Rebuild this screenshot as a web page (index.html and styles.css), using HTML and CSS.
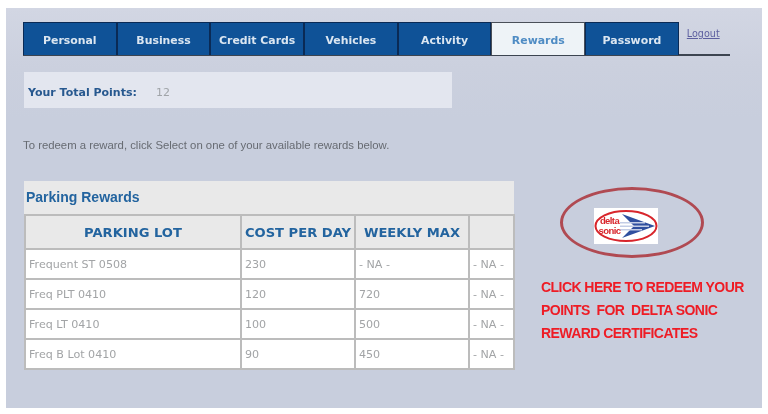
FILE: index.html
```html
<!DOCTYPE html>
<html lang="en">
<head>
<meta charset="utf-8">
<title>Rewards</title>
<link rel="stylesheet" href="styles.css">
</head>
<body>
<div class="panel">
  <nav class="nav">
    <a class="tab">Personal</a>
    <a class="tab">Business</a>
    <a class="tab">Credit Cards</a>
    <a class="tab">Vehicles</a>
    <a class="tab">Activity</a>
    <a class="tab active">Rewards</a>
    <a class="tab">Password</a>
    <a class="logout">Logout</a>
  </nav>
  <div class="content">
    <main class="main">
      <div class="points"><b>Your Total Points:</b><span>12</span></div>
      <p class="intro">To redeem a reward, click Select on one of your available rewards below.</p>
      <div class="rewards">
        <h2 class="title">Parking Rewards</h2>
        <table class="table">
          <colgroup><col class="c1"><col class="c2"><col class="c3"><col class="c4"></colgroup>
          <thead>
            <tr><th>PARKING LOT</th><th>COST PER DAY</th><th>WEEKLY MAX</th><th></th></tr>
          </thead>
          <tbody>
            <tr><td>Frequent ST 0508</td><td>230</td><td>- NA -</td><td>- NA -</td></tr>
            <tr><td>Freq PLT 0410</td><td>120</td><td>720</td><td>- NA -</td></tr>
            <tr><td>Freq LT 0410</td><td>100</td><td>500</td><td>- NA -</td></tr>
            <tr><td>Freq B Lot 0410</td><td>90</td><td>450</td><td>- NA -</td></tr>
          </tbody>
        </table>
      </div>
    </main>
    <aside class="side">
      <div class="ring">
        <div class="logo">
          <svg viewBox="0 0 64 36" width="64" height="36" aria-label="delta sonic">
            <ellipse cx="32" cy="18" rx="30.5" ry="15" fill="#fff" stroke="#d8262c" stroke-width="2"/>
            <path d="M28 6 L61 18 L28 30 L40 18 Z" fill="#2f4f9f"/>
            <path d="M26 14h25v1.5H26zM26 17.5h29v1.5H26zM26 21h22v1.5H26z" fill="#c3cde6"/>
            <text x="15.5" y="16" class="logo-text">delta</text>
            <text x="15.5" y="25.5" class="logo-text">sonic</text>
          </svg>
        </div>
      </div>
      <p class="cta">CLICK HERE TO REDEEM YOUR<br>POINTS&nbsp; FOR&nbsp; DELTA SONIC<br>REWARD CERTIFICATES</p>
    </aside>
  </div>
</div>
</body>
</html>
```
FILE: styles.css
```css
* { box-sizing: border-box; }
html, body { margin: 0; background: #fff; }
body { width: 768px; height: 414px; overflow: hidden; padding: 8px 6px 6px; }

.panel {
  height: 400px;
  padding: 14px 17px 0;
  background: linear-gradient(180deg, #d2d6e3 0, #cbd0de 60px, #c8cedd 110px);
  filter: blur(0.7px);
}

.nav { display: flex; height: 34px; width: 707px; border-bottom: 2px solid #3c4450; }
.tab {
  width: 93.7px;
  height: 33px;
  display: flex;
  align-items: center;
  justify-content: center;
  background: #0f5297;
  border: 1px solid #0a2a55;
  border-width: 1px 1px 0;
  color: #dbe6f1;
  font: bold 10.9px "DejaVu Sans", sans-serif;
  padding-top: 2px;
}
.tab.active { background: #eef3f7; color: #4f8cc4; border-color: #4a4f58; }
.logout {
  margin: 6px 0 0 8px;
  color: #5d5fa0;
  font: 9.6px "DejaVu Sans", sans-serif;
  text-decoration: underline;
}

.content { display: flex; }
.main { width: 490px; margin-left: 1px; }
.points {
  margin-top: 16px;
  height: 36px;
  width: 428px;
  display: flex;
  align-items: center;
  background: #e3e6ef;
  padding: 5px 0 0 4px;
  font: 11px "DejaVu Sans", sans-serif;
}
.points b { color: #27588f; }
.points span { margin-left: 19px; color: #a0a4a8; }

.intro {
  margin: 30px 0 0 -1px;
  height: 15px;
  color: #676b72;
  font: 11.35px/15px "Liberation Sans", sans-serif;
  white-space: nowrap;
}

.rewards { margin-top: 28px; }
.title {
  margin: 0;
  height: 33px;
  padding: 1px 0 0 2px;
  background: #e9e9e9;
  color: #23649f;
  font: bold 14px/30px "Liberation Sans", sans-serif;
}
.table { width: 489px; border-collapse: collapse; table-layout: fixed; background: #fff; }
.c1 { width: 216px; }
.c2 { width: 114px; }
.c3 { width: 114px; }
.c4 { width: 45px; }
.table th, .table td { border: 2px solid #bcbcbc; padding: 0; }
.table th {
  height: 34px;
  background: #e9e9e9;
  color: #23649f;
  font: bold 13.1px "DejaVu Sans", sans-serif;
  text-align: center;
  white-space: nowrap;
}
.table td {
  height: 30px;
  padding: 1px 0 0 3px;
  color: #a2a4a6;
  font: 11.1px "DejaVu Sans", sans-serif;
  white-space: nowrap;
}

.side { margin-left: 27px; }
.ring {
  margin: 131px 0 0 19px;
  width: 144px;
  height: 71px;
  border: 3px solid #b04a52;
  border-radius: 50%;
  display: flex;
  align-items: center;
  justify-content: center;
}
.logo { background: #fff; width: 64px; height: 36px; margin: 6px 12px 0 0; }
.logo svg { display: block; }
.logo-text {
  fill: #d8262c;
  font: bold 9.5px "Liberation Sans", sans-serif;
  letter-spacing: -0.6px;
  text-anchor: middle;
}
.cta {
  margin: 18px 0 0;
  color: #ee1c25;
  font: bold 14px/23px "Liberation Sans", sans-serif;
  letter-spacing: -0.55px;
  white-space: nowrap;
}
```
